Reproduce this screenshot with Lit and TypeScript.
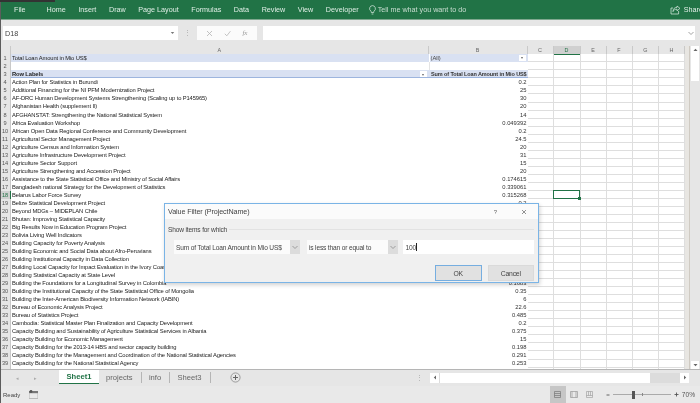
import { LitElement, html, css, svg } from "lit";
import { customElement } from "lit/decorators.js";

const ROWS: [string, string][] = [
  ["Total Loan Amount in Mio US$", "(All)"],
  ["", ""],
  ["Row Labels", "Sum of Total Loan Amount in Mio US$"],
  ["Action Plan for Statistics in Burundi", "0.2"],
  ["Additional Financing for the NI PFM Modernization Project", "25"],
  ["AF-DRC Human Development Systems Strengthening (Scaling up to P145965)", "30"],
  ["Afghanistan Health (supplement II)", "20"],
  ["AFGHANSTAT: Strengthening the National Statistical System", "14"],
  ["Africa Evaluation Workshop", "0.049392"],
  ["African Open Data Regional Conference and Community Development", "0.2"],
  ["Agricultural Sector Management Project", "24.5"],
  ["Agriculture Census and Information System", "20"],
  ["Agriculture Infrastructure Development Project", "31"],
  ["Agriculture Sector Support", "15"],
  ["Agriculture Strengthening and Accession Project", "20"],
  ["Assistance to the State Statistical Office and Ministry of Social Affairs", "0.174615"],
  ["Bangladesh national Strategy for the Development of Statistics", "0.339061"],
  ["Belarus Labor Force Survey", "0.315268"],
  ["Belize Statistical Development Project", "0.2"],
  ["Beyond MDGs – MIDEPLAN Chile", "0.3"],
  ["Bhutan: Improving Statistical Capacity", "0.4"],
  ["Big Results Now in Education Program Project", "5"],
  ["Bolivia Living Well Indicators", "0.3"],
  ["Building Capacity for Poverty Analysis", "0.3"],
  ["Building Economic and Social Data about Afro-Peruvians", "0.2"],
  ["Building Institutional Capacity in Data Collection", "0.3"],
  ["Building Local Capacity for Impact Evaluation in the Ivory Coast", "0.2"],
  ["Building Statistical Capacity at State Level", "0.4"],
  ["Building the Foundations for a Longitudinal Survey in Colombia", "0.1683"],
  ["Building the Institutional Capacity of the State Statistical Office of Mongolia", "0.35"],
  ["Building the Inter-American Biodiversity Information Network (IABIN)", "6"],
  ["Bureau of Economic Analysis Project", "22.6"],
  ["Bureau of Statistics Project", "0.485"],
  ["Cambodia: Statistical Master Plan Finalization and Capacity Development", "0.2"],
  ["Capacity Building and Sustainability of Agriculture Statistical Services in Albania", "0.375"],
  ["Capacity Building for Economic Management", "15"],
  ["Capacity Building for the 2013-14 HBS and sector capacity building", "0.198"],
  ["Capacity Building for the Management and Coordination of the National Statistical Agencies", "0.291"],
  ["Capacity Building for the National Statistical Agency", "0.253"],
  ["", ""],
];

const TABS = ["Home", "Insert", "Draw", "Page Layout", "Formulas", "Data", "Review", "View", "Developer"];
const COLS = ["A", "B", "C", "D", "E", "F", "G", "H"];

const chevron = svg`<path d="M1.5 3 4 5.5 6.5 3" fill="none" stroke="#8a8a8a" stroke-width=".8"/>`;

@customElement("app-root")
export class AppRoot extends LitElement {
  static styles = css`
    :host { display: flex; flex-direction: column; position: relative; width: 700px; height: 403px; overflow: hidden;
      font-family: "Liberation Sans", Arial, sans-serif; color: #333; background: #e6e6e6; filter: blur(.3px); }
    .winedge { position: absolute; left: 0; top: 0; width: 1px; height: 100%; background: #5c5c5c; z-index: 6; }
    .wintop { position: absolute; left: 0; top: 0; width: 55px; height: 1.5px; background: #333; z-index: 6; }
    .ribbon { height: 19px; background: #217346; border-bottom: 1px solid #7fa88f; display: flex; align-items: center;
      color: #dfeee5; font-size: 7.2px; padding-left: 14px; white-space: nowrap; flex: none; box-sizing: content-box; }
    .tabs { display: flex; gap: 12.6px; margin-left: 21px; }
    .tell { display: flex; align-items: center; gap: 2px; margin-left: 10px; color: #c9ded1; }
    .share { display: flex; align-items: center; gap: 3px; margin-left: auto; margin-right: -3px; color: #e3efe8; }
    .toolbar { height: 26px; display: flex; align-items: center; padding: 0 5px 0 3px; flex: none; background: #e6e6e6; }
    .namebox { width: 175px; height: 14px; background: #fff; display: flex; align-items: center; justify-content: space-between;
      padding: 0 3px 0 2px; box-sizing: border-box; font-size: 7.2px; color: #444; }
    .grip { width: 19px; text-align: center; color: #aaa; font-size: 7px; }
    .fbtns { width: 60px; height: 14px; background: #fbfbfb; display: flex; align-items: center; justify-content: space-around; padding: 0 4px; box-sizing: border-box;
      color: #999; font-size: 7px; font-style: italic; font-family: "Liberation Serif", serif; }
    .finput { flex: 1; height: 14px; margin-left: 6px; background: #fff; display: flex; align-items: center; justify-content: flex-end; }
    .sheetwrap { height: 323.5px; flex: none; display: flex; border-bottom: 1px solid #b5b5b5; background: #fff; box-sizing: border-box; }
    .sheet { width: 685px; overflow: hidden; flex: none; }
    .row, .colhead { display: grid; grid-template-columns: 11px 417.5px 99px 26px 27px 26px 26px 26.5px 26px; }
    .colhead { height: 8.3px; background: #e6e6e6; font-size: 5.4px; color: #666; line-height: 8.3px; text-align: center; }
    .colhead > div { border-right: 1px solid #c9c9c9; box-sizing: border-box; }
    .colhead > div.sel { background: #d0d0d0; border-bottom: 1px solid #217346; color: #217346; }
    .row { height: 8.04px; font-size: 5.8px; letter-spacing: -.12px; line-height: 8.04px; color: #222; }
    .rh { background: #e6e6e6; text-align: center; color: #555; border-right: 1px solid #c9c9c9; box-sizing: border-box; font-size: 5.6px; letter-spacing: 0; }
    .rh.sel { background: #d0d0d0; border-right: 1px solid #217346; color: #217346; }
    .a, .b { white-space: nowrap; overflow: hidden; padding: 0 1px; box-sizing: border-box; position: relative; }
    .b { text-align: right; color: #333; letter-spacing: 0; }
    .hl .a, .hl .b { background: #d9e1f2; }
    .r1 .b { text-align: left; border-left: 1px solid #fff; color: #444; }
    .r2 .b { border-left: 1px solid #e4e4e4; }
    .r3 .a, .r3 .b { font-weight: 700; border-bottom: 1px solid #9db5de; }
    .r3 .b { font-size: 5.5px; letter-spacing: -.02em; }
    .dd { position: absolute; right: 2px; top: 1px; width: 7px; height: 6px; background: #fff; }
    .dd::after { content: ""; position: absolute; left: 2px; top: 2.2px; border: 1.5px solid transparent; border-top: 2px solid #666; border-bottom: 0; }
    .c { border-right: 1px solid #dedede; border-bottom: 1px solid #dedede; box-sizing: border-box; position: relative; }
    .cursor { position: absolute; left: -1px; top: -1px; border: 1px solid #217346; width: 25.5px; height: 7.5px; z-index: 2; }
    .cursor::after { content: ""; position: absolute; right: -2px; bottom: -2px; width: 3px; height: 3px; background: #217346; }
    .edge { flex: 1; background: #e8e6e2; border-right: 1px solid #cfcac2; }
    .vscroll { width: 10px; flex: none; background: #e6e6e6; display: flex; flex-direction: column; box-sizing: border-box; padding-left: 1px; padding-right: 1px; }
    .vbtn { height: 8px; background: #fff; display: flex; align-items: center; justify-content: center; flex: none; }
    .vthumb { height: 27px; background: #fff; flex: none; }
    .vtrack { flex: 1; }
    .tabbar { height: 16.5px; flex: none; display: flex; align-items: center; background: #e6e6e6; font-size: 7.6px; color: #666; position: relative; }
    .nav { width: 59px; display: flex; gap: 15px; padding-left: 16px; box-sizing: border-box; color: #aaa; font-size: 5px; }
    .sheettab { height: 15px; display: flex; align-items: center; padding: 0 8.3px 0 7px; border-right: 1px solid #b5b5b5; }
    .sheettab.on { background: #fff; color: #217346; font-weight: 700; border-right: 0; border-bottom: 1.5px solid #217346; height: 14.5px; width: 40px; padding: 0; justify-content: center; align-self: flex-start; box-sizing: border-box; }
    .sheettab.plain { height: 11px; }
    .plus { margin-left: 19px; display: flex; }
    .hsplit { margin-left: auto; color: #aaa; font-size: 7px; margin-right: 7px; }
    .hscroll { width: 259px; height: 10px; margin-right: 11px; display: flex; background: #dcdcdc; }
    .hbtn { width: 9px; background: #fff; display: flex; align-items: center; justify-content: center; }
    .hthumb { width: 210px; background: #fff; margin-left: 1px; }
    .htrack { flex: 1; }
    .status { height: 17px; flex: none; display: flex; align-items: center; padding-left: 3px; font-size: 6px; color: #444; background: #e9e9e9; }
    .macro { margin-left: 9px; display: flex; }
    .views { margin-left: auto; display: flex; align-items: stretch; height: 100%; font-size: 6.6px; }
    .view { width: 16px; display: flex; align-items: center; justify-content: center; }
    .view.on { background: #c6c6c6; }
    .zoomctl { display: flex; align-items: center; margin-left: 8px; margin-right: 5px; color: #555; gap: 3px; }
    .track { width: 58px; height: 1px; background: #aaa; position: relative; }
    .track i { position: absolute; left: 19px; top: -3.5px; width: 3px; height: 8px; background: #555; }
    .track b { position: absolute; left: 29px; top: -1px; width: 1px; height: 3px; background: #888; }
    .dialog { position: absolute; left: 164px; top: 203px; width: 375px; height: 80px; box-sizing: border-box; background: #f0f0f0;
      border: 1px solid #7ab4e6; box-shadow: 1px 2px 4px rgba(0,0,0,.18); display: flex; flex-direction: column; font-size: 6.6px; letter-spacing: -.16px; color: #444; z-index: 5; }
    .dtitle { height: 15px; flex: none; background: #fbfbfb; display: flex; align-items: center; padding: 0 11px 0 3px; font-size: 7.2px; letter-spacing: -.1px; color: #444; }
    .dq { margin-left: auto; font-size: 6px; margin-right: 24px; color: #666; }
    .dbody { flex: 1; padding: 6px 4px 0 3px; display: flex; flex-direction: column; }
    .legend { display: flex; align-items: center; gap: 2px; height: 8px; }
    .legend::after { content: ""; flex: 1; height: 1px; background: #e2e2e2; }
    .controls { display: flex; margin-top: 7px; padding-left: 6px; height: 14px; }
    .pick { display: flex; }
    .pick .val { background: #fbfbfb; display: flex; align-items: center; padding-left: 2px; box-sizing: border-box; white-space: nowrap; }
    .pick .arrow { width: 10px; background: #dcdcdc; display: flex; align-items: center; justify-content: center; }
    .s1 .val { width: 116px; }
    .s2 { margin-left: 7px; }
    .s2 .val { width: 80.5px; }
    .inp { margin-left: 5px; width: 131.5px; background: #fff; display: flex; align-items: center; padding-left: 3px; box-sizing: border-box; }
    .inp i { width: 1px; height: 8px; background: #222; }
    .btns { display: flex; justify-content: flex-end; gap: 6px; margin-top: 11px; }
    .btn { width: 46.5px; height: 16px; background: #e1e1e1; border: 1px solid #dadada; box-sizing: border-box; display: flex; align-items: center; justify-content: center; font-size: 6.8px; color: #444; }
    .btn.def { border-color: #76aee0; }
  `;

  private row(i: number) {
    const [a, b] = ROWS[i];
    const n = i + 1;
    const cls = `row ${n === 1 || n === 3 ? "hl" : ""} r${n}`;
    return html`<div class=${cls}>
      <div class="rh ${n === 18 ? "sel" : ""}">${n}</div>
      <div class="a">${a}${n === 3 ? html`<span class="dd"></span>` : ""}</div>
      <div class="b">${b}${n === 1 ? html`<span class="dd"></span>` : ""}</div>
      ${COLS.slice(2).map((c) => html`<div class="c">${c === "D" && n === 18 ? html`<div class="cursor"></div>` : ""}</div>`)}
    </div>`;
  }

  render() {
    return html`
      <div class="winedge"></div>
      <div class="wintop"></div>
      <div class="ribbon">
        <span>File</span>
        <div class="tabs">${TABS.map((t) => html`<span>${t}</span>`)}</div>
        <div class="tell">
          <svg width="7" height="10" viewBox="0 0 7 10"><path d="M3.5.6a3 3 0 0 0-1.7 5.4c.4.4.5.9.5 1.5h2.4c0-.6.1-1.1.5-1.5A3 3 0 0 0 3.5.6zM2.6 9h1.8" fill="none" stroke="#e3efe8" stroke-width=".7"/></svg>
          <span>Tell me what you want to do</span>
        </div>
        <div class="share">
          <svg width="11" height="10" viewBox="0 0 11 10"><path d="M7 1l3 2.4L7 5.8V4.2C4.8 4.2 3.6 5 3 6.6 3 3.8 4.6 2.4 7 2.4zM8.6 6v3H1V3h2" fill="none" stroke="#e3efe8" stroke-width=".7"/></svg>
          <span>Share</span>
        </div>
      </div>

      <div class="toolbar">
        <div class="namebox"><span>D18</span><svg width="5" height="4" viewBox="0 0 5 4"><path d="M.8 1h3.4L2.5 3z" fill="#777"/></svg></div>
        <div class="grip">⋮</div>
        <div class="fbtns">
          <svg width="7" height="7" viewBox="0 0 7 7"><path d="M1 1l5 5M6 1 1 6" stroke="#b5b5b5" stroke-width=".8" fill="none"/></svg>
          <svg width="7" height="7" viewBox="0 0 7 7"><path d="M.8 3.8 2.8 5.8 6.4 1.2" stroke="#b5b5b5" stroke-width=".8" fill="none"/></svg>
          <span>fx</span>
        </div>
        <div class="finput"><svg width="8" height="8" viewBox="0 0 8 8">${chevron}</svg></div>
      </div>

      <div class="sheetwrap">
        <div class="sheet">
          <div class="colhead">
            <div></div>
            ${COLS.map((c) => html`<div class=${c === "D" ? "sel" : ""}>${c}</div>`)}
          </div>
          ${ROWS.map((_, i) => this.row(i))}
        </div>
        <div class="edge"></div>
        <div class="vscroll">
          <div class="vbtn"><svg width="5" height="4" viewBox="0 0 5 4"><path d="M.5 3h4L2.5.8z" fill="#666"/></svg></div>
          <div class="vthumb"></div>
          <div class="vtrack"></div>
          <div class="vbtn"><svg width="5" height="4" viewBox="0 0 5 4"><path d="M.5 1h4L2.5 3.2z" fill="#666"/></svg></div>
        </div>
      </div>

      <div class="tabbar">
        <div class="nav"><span>◂</span><span>▸</span></div>
        <div class="sheettab on">Sheet1</div>
        <div class="sheettab plain">projects</div>
        <div class="sheettab plain">info</div>
        <div class="sheettab plain">Sheet3</div>
        <div class="plus"><svg width="11" height="11" viewBox="0 0 11 11"><circle cx="5.5" cy="5.5" r="4.6" fill="none" stroke="#8a8a8a" stroke-width=".8"/><path d="M5.5 3v5M3 5.5h5" stroke="#666" stroke-width="1"/></svg></div>
        <div class="hsplit">⋮</div>
        <div class="hscroll">
          <div class="hbtn"><svg width="4" height="5" viewBox="0 0 4 5"><path d="M3 .5v4L.8 2.5z" fill="#666"/></svg></div>
          <div class="hthumb"></div>
          <div class="htrack"></div>
          <div class="hbtn"><svg width="4" height="5" viewBox="0 0 4 5"><path d="M1 .5v4l2.2-2z" fill="#666"/></svg></div>
        </div>
      </div>

      <div class="status">
        <span>Ready</span>
        <span class="macro"><svg width="9" height="9" viewBox="0 0 9 9"><rect x="0" y="3" width="9" height="5.5" fill="none" stroke="#999" stroke-width=".6"/><rect x="0" y="1" width="9" height="2" fill="#777"/><circle cx="2" cy="1.5" r="1.4" fill="#555"/></svg></span>
        <div class="views">
          <div class="view on"><svg width="7" height="7" viewBox="0 0 7 7"><path d="M.5.5h6v6h-6zM.5 2.5h6M.5 4.5h6" fill="none" stroke="#777" stroke-width=".7"/></svg></div>
          <div class="view"><svg width="8" height="7" viewBox="0 0 8 7"><path d="M.5.5h7v6h-7zM2 .5v6M6 .5v6" fill="none" stroke="#999" stroke-width=".7"/></svg></div>
          <div class="view"><svg width="7" height="7" viewBox="0 0 7 7"><path d="M.5.5h6v6h-6zM.5 4.5h6M2.5.5v4M4.5.5v4" fill="none" stroke="#999" stroke-width=".6"/></svg></div>
          <div class="zoomctl">
            <svg width="4" height="4" viewBox="0 0 4 4"><path d="M.5 2h3" stroke="#555" stroke-width=".9"/></svg>
            <div class="track"><i></i><b></b></div>
            <svg width="5" height="5" viewBox="0 0 5 5"><path d="M.5 2.5h4M2.5.5v4" stroke="#555" stroke-width=".9"/></svg>
            <span>70%</span>
          </div>
        </div>
      </div>

      <div class="dialog">
        <div class="dtitle">
          <span>Value Filter (ProjectName)</span>
          <span class="dq">?</span>
          <svg width="6" height="6" viewBox="0 0 6 6"><path d="M1 1l4 4M5 1 1 5" stroke="#666" stroke-width=".7" fill="none"/></svg>
        </div>
        <div class="dbody">
          <div class="legend"><span>Show items for which</span></div>
          <div class="controls">
            <div class="pick s1"><div class="val">Sum of Total Loan Amount in Mio US$</div><div class="arrow"><svg width="8" height="8" viewBox="0 0 8 8">${chevron}</svg></div></div>
            <div class="pick s2"><div class="val">is less than or equal to</div><div class="arrow"><svg width="8" height="8" viewBox="0 0 8 8">${chevron}</svg></div></div>
            <div class="inp"><span>100</span><i></i></div>
          </div>
          <div class="btns">
            <div class="btn def">OK</div>
            <div class="btn">Cancel</div>
          </div>
        </div>
      </div>
    `;
  }
}
